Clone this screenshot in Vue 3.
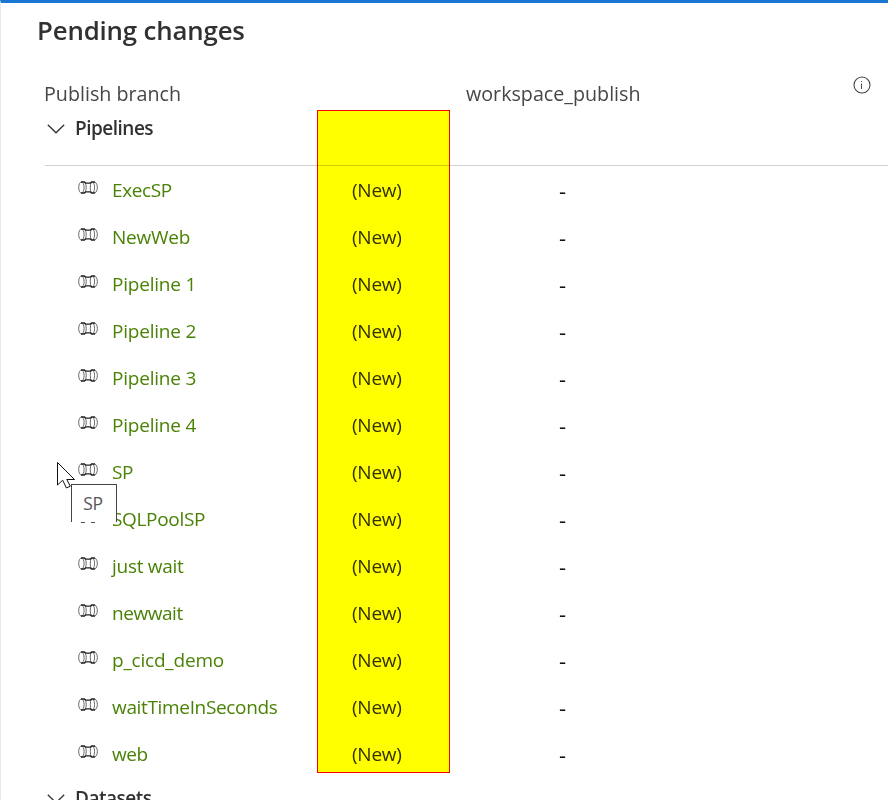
<template>
  <section class="pending-panel">
    <h2>Pending changes</h2>

    <div class="branch-row">
      <span class="branch-label">Publish branch</span>
      <span class="branch-name">workspace_publish</span>
      <svg class="info-icon" viewBox="0 0 18 18">
        <circle cx="9" cy="9" r="8" fill="none" stroke="#444" stroke-width="1.1" />
        <path d="M8.5 7.4V13M8.5 4.9V6.1" fill="none" stroke="#555" stroke-width="1.1" />
      </svg>
    </div>

    <div class="group-header">
      <svg class="chevron" viewBox="0 0 18 10">
        <path d="M.8 .8L9 8.8L17.2 .8" />
      </svg>
      <span>Pipelines</span>
    </div>

    <ul class="change-list">
      <li v-for="item in pipelines" :key="item.name" class="change-item">
        <svg class="pipeline-icon" viewBox="0 0 20 13">
          <ellipse cx="3.4" cy="6.5" rx="2.7" ry="5.5" />
          <path d="M6.2 1C8.9 2.8 8.9 10.2 6.2 12" />
          <path d="M13.6 1C11.8 3 11.8 10 13.6 12" />
          <path d="M16.8 1C20.2 2.6 20.2 10.4 16.8 12" />
          <path d="M14.9 1C17.1 3 17.1 10 14.9 12" />
          <path
            d="M3 1H6.4L7.6 2.1H12.4L13.6 1H17M3 12H6.4L7.6 10.9H12.4L13.6 12H17"
            class="cap"
          />
        </svg>
        <span class="item-name" :style="{ letterSpacing: item.spacing + 'px' }">{{ item.name }}</span>
        <span class="item-status">(New)</span>
        <span class="item-existing">-</span>
      </li>
    </ul>

    <div class="group-header datasets">
      <svg class="chevron" viewBox="0 0 18 10">
        <path d="M.8 .8L9 8.8L17.2 .8" />
      </svg>
      <span>Datasets</span>
    </div>

    <div class="highlight"></div>
    <div class="tooltip">SP</div>
    <svg class="cursor" viewBox="0 0 20 30">
      <path d="M1.5 1.5V24L6.7 19.2L10.4 27L14.3 25.2L10.8 18.5H18.5Z" />
    </svg>
  </section>
</template>

<script setup>
import { reactive } from 'vue';

const pipelines = reactive([
  { name: 'ExecSP', spacing: -0.4 },
  { name: 'NewWeb', spacing: -0.25 },
  { name: 'Pipeline 1', spacing: -0.22 },
  { name: 'Pipeline 2', spacing: -0.22 },
  { name: 'Pipeline 3', spacing: -0.22 },
  { name: 'Pipeline 4', spacing: -0.22 },
  { name: 'SP', spacing: -0.3 },
  { name: 'SQLPoolSP', spacing: -0.33 },
  { name: 'just wait', spacing: -0.28 },
  { name: 'newwait', spacing: -0.45 },
  { name: 'p_cicd_demo', spacing: -0.2 },
  { name: 'waitTimeInSeconds', spacing: -0.34 },
  { name: 'web', spacing: -0.4 },
]);
</script>

<style>
body {
  overflow: hidden;
}
</style>

<style scoped>
.pending-panel {
  position: relative;
  box-sizing: border-box;
  height: 800px;
  overflow: hidden;
  background-color: #ffffff;
  border-top: 3px solid #1976d2;
  border-left: 1px solid #eaeaea;
  font-family: 'Open Sans', 'Noto Sans', sans-serif;
  font-size: 19px;
  color: #323130;
}
h2 {
  margin: 9px 0 0 36px;
  font-size: 25.8px;
  font-weight: 600;
  letter-spacing: -0.15px;
  line-height: 36px;
}
.branch-row {
  display: flex;
  height: 28px;
  margin: 32px 17px 0 43px;
  font-size: 19.7px;
  line-height: 28px;
  color: #484644;
}
.branch-label {
  width: 422px;
}
.branch-name {
  flex: 1;
}
.info-icon {
  width: 18px;
  height: 18px;
  margin-top: -4px;
}
.group-header {
  display: flex;
  align-items: flex-start;
  box-sizing: border-box;
  height: 58px;
  margin-left: 44px;
  padding-left: 1px;
  border-bottom: 1px solid #cfcfcf;
  font-weight: 600;
  letter-spacing: -0.5px;
  line-height: 40px;
}
.chevron {
  width: 18px;
  height: 10px;
  margin: 16px 10px 0 1px;
  fill: none;
  stroke: #323130;
  stroke-width: 1.3;
}
.change-list {
  margin: 0;
  padding: 0;
  list-style: none;
}
.change-item {
  display: grid;
  grid-template-columns: 34px 240px 207px 1fr;
  height: 47px;
  padding-left: 77px;
  line-height: 48px;
}
.pipeline-icon {
  width: 20px;
  height: 13px;
  margin-top: 15px;
  fill: none;
  stroke: #666;
  stroke-width: 1;
}
.pipeline-icon .cap {
  stroke: #222;
  stroke-width: 1.3;
}
.item-name {
  color: #498205;
  white-space: nowrap;
}
.item-status {
  letter-spacing: -0.25px;
}
.item-existing {
  font-size: 22px;
  font-weight: 500;
  color: #111;
}
.datasets {
  margin-top: 1px;
  border-bottom: 0;
}
.highlight {
  position: absolute;
  top: 107px;
  left: 316px;
  box-sizing: border-box;
  width: 133px;
  height: 663px;
  border: 1px solid #ff0000;
  background-color: #ffff00;
  mix-blend-mode: multiply;
}
.tooltip {
  position: absolute;
  top: 481px;
  left: 70px;
  box-sizing: border-box;
  width: 46px;
  height: 38px;
  padding-right: 2px;
  border: 1px solid #444;
  border-bottom: 0;
  background-color: #ffffff;
  font-size: 17.5px;
  letter-spacing: -0.3px;
  line-height: 37px;
  text-align: center;
  color: #575757;
}
.cursor {
  position: absolute;
  top: 458px;
  left: 55px;
  width: 20px;
  height: 30px;
  fill: #ffffff;
  stroke: #111;
  stroke-width: 1;
}
</style>
